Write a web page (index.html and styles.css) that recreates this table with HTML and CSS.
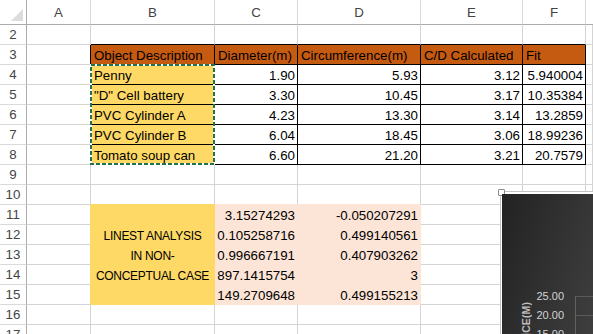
FILE: index.html
```html
<!DOCTYPE html>
<html>
<head>
<meta charset="utf-8">
<link rel="stylesheet" href="styles.css">
</head>
<body>
<div class="sheet">
  <div class="grid">
    <!-- column headers -->
    <div class="c corner"><svg width="12" height="12" viewBox="0 0 12 12"><polygon points="12,0 12,12 0,12" fill="#dcdcdc"/></svg></div>
    <div class="c ch">A</div><div class="c ch">B</div><div class="c ch">C</div><div class="c ch">D</div><div class="c ch">E</div><div class="c ch">F</div><div class="c ch last"></div>

    <!-- row 2 -->
    <div class="c rh">2</div><div class="c"></div><div class="c topb"></div><div class="c topb"></div><div class="c topb"></div><div class="c topb"></div><div class="c topb"></div><div class="c"></div>

    <!-- row 3 -->
    <div class="c rh">3</div><div class="c lb"></div>
    <div class="c hdr">Object Description</div><div class="c hdr">Diameter(m)</div><div class="c hdr">Circumference(m)</div><div class="c hdr">C/D Calculated</div><div class="c hdr">Fit</div><div class="c"></div>

    <!-- row 4 -->
    <div class="c rh">4</div><div class="c lb"></div>
    <div class="c tb yl">Penny</div><div class="c tb num">1.90</div><div class="c tb num">5.93</div><div class="c tb num">3.12</div><div class="c tb num">5.940004</div><div class="c"></div>

    <!-- row 5 -->
    <div class="c rh">5</div><div class="c lb"></div>
    <div class="c tb yl">"D" Cell battery</div><div class="c tb num">3.30</div><div class="c tb num">10.45</div><div class="c tb num">3.17</div><div class="c tb num">10.35384</div><div class="c"></div>

    <!-- row 6 -->
    <div class="c rh">6</div><div class="c lb"></div>
    <div class="c tb yl">PVC Cylinder A</div><div class="c tb num">4.23</div><div class="c tb num">13.30</div><div class="c tb num">3.14</div><div class="c tb num">13.2859</div><div class="c"></div>

    <!-- row 7 -->
    <div class="c rh">7</div><div class="c lb"></div>
    <div class="c tb yl">PVC Cylinder B</div><div class="c tb num">6.04</div><div class="c tb num">18.45</div><div class="c tb num">3.06</div><div class="c tb num">18.99236</div><div class="c"></div>

    <!-- row 8 -->
    <div class="c rh">8</div><div class="c lb"></div>
    <div class="c tb yl">Tomato soup can</div><div class="c tb num">6.60</div><div class="c tb num">21.20</div><div class="c tb num">3.21</div><div class="c tb num">20.7579</div><div class="c"></div>

    <!-- row 9 -->
    <div class="c rh">9</div><div class="c"></div><div class="c"></div><div class="c"></div><div class="c"></div><div class="c"></div><div class="c"></div><div class="c"></div>

    <!-- row 10 -->
    <div class="c rh">10</div><div class="c"></div><div class="c ylb"></div><div class="c peb"></div><div class="c peb"></div><div class="c"></div><div class="c"></div><div class="c"></div>

    <!-- row 11 -->
    <div class="c rh">11</div><div class="c yll"></div>
    <div class="c merge"><span>LINEST ANALYSIS<br>IN NON-<br>CONCEPTUAL CASE</span></div>
    <div class="c pe num">3.15274293</div><div class="c pe num">-0.050207291</div><div class="c"></div><div class="c"></div><div class="c"></div>

    <!-- row 12 -->
    <div class="c rh">12</div><div class="c yll"></div>
    <div class="c pe num">0.105258716</div><div class="c pe num">0.499140561</div><div class="c"></div><div class="c"></div><div class="c"></div>

    <!-- row 13 -->
    <div class="c rh">13</div><div class="c yll"></div>
    <div class="c pe num">0.996667191</div><div class="c pe num">0.407903262</div><div class="c"></div><div class="c"></div><div class="c"></div>

    <!-- row 14 -->
    <div class="c rh">14</div><div class="c yll"></div>
    <div class="c pe num">897.1415754</div><div class="c pe num">3</div><div class="c"></div><div class="c"></div><div class="c"></div>

    <!-- row 15 -->
    <div class="c rh">15</div><div class="c yll"></div>
    <div class="c pe num">149.2709648</div><div class="c pe num">0.499155213</div><div class="c"></div><div class="c"></div><div class="c"></div>

    <!-- row 16 -->
    <div class="c rh">16</div><div class="c"></div><div class="c"></div><div class="c"></div><div class="c"></div><div class="c"></div><div class="c"></div><div class="c"></div>

    <!-- row 17 -->
    <div class="c rh">17</div><div class="c"></div><div class="c"></div><div class="c"></div><div class="c"></div><div class="c"></div><div class="c"></div><div class="c"></div>
  </div>

  <svg class="marquee" width="125" height="101" viewBox="0 0 125 101">
    <rect x="1" y="1" width="123" height="99" fill="none" stroke="#ffffff" stroke-width="2"/>
    <rect x="1" y="1" width="123" height="99" fill="none" stroke="#217346" stroke-width="2" stroke-dasharray="4 2"/>
  </svg>

  <div class="chart">
    <div class="handle"></div>
    <div class="chart-bg">
      <div class="axis-title">CIRCUMFERENCE(M)</div>
      <div class="tick t25">25.00</div>
      <div class="tick t20">20.00</div>
      <div class="tick t15">15.00</div>
      <div class="vaxis"></div>
      <div class="gline g25"></div>
      <div class="gline g20"></div>
      <div class="gline g15"></div>
    </div>
  </div>
</div>
</body>
</html>
```

FILE: styles.css
```css
html, body {
  margin: 0;
  padding: 0;
  background: #ffffff;
  overflow: hidden;
}

.sheet {
  position: relative;
  width: 593px;
  height: 334px;
  overflow: hidden;
  font-family: "Liberation Sans", Arial, sans-serif;
  font-size: 13.3px;
  color: #000;
}

.grid {
  display: grid;
  grid-template-columns: 27px 64px 124px 83px 123px 102px 63px 1fr;
  grid-template-rows: 25px repeat(16, 20px);
}

.c {
  box-sizing: border-box;
  border-right: 1px solid #d4d4d4;
  border-bottom: 1px solid #d4d4d4;
  padding: 0 2px 0 3px;
  display: flex;
  align-items: flex-end;
  line-height: 16px;
  white-space: nowrap;
  overflow: hidden;
}

.corner {
  border-right-color: #ababab;
  border-bottom-color: #ababab;
  align-items: flex-end;
  justify-content: flex-end;
  padding: 0 3px 3px 0;
}

.ch {
  justify-content: center;
  align-items: center;
  color: #444;
  border-right-color: #dadada;
  border-bottom-color: #ababab;
  padding: 2px 0 0 0;
}

.ch.last {
  border-right: none;
}

.rh {
  justify-content: center;
  align-items: center;
  color: #444;
  border-right-color: #ababab;
  border-bottom-color: #dadada;
  padding: 1px 0 0 0;
}

.num {
  justify-content: flex-end;
  padding-left: 0;
}

.topb {
  border-bottom-color: #000;
}

.lb {
  border-right-color: #000;
}

.hdr {
  background: #c55a11;
  border-right-color: #000;
  border-bottom-color: #000;
}

.tb {
  border-right-color: #000;
  border-bottom-color: #000;
}

.yl {
  background: #ffd966;
}

.ylb {
  border-bottom-color: #ffd966;
}

.peb {
  border-bottom-color: #fce4d6;
}

.yll {
  border-right-color: #ffd966;
}

.merge {
  grid-row: span 5;
  background: #ffd966;
  border-right-color: #ffd966;
  border-bottom-color: #ffd966;
  justify-content: center;
  align-items: center;
  text-align: center;
  line-height: 20px;
  padding: 0;
  font-size: 12px;
  letter-spacing: -0.3px;
}

.merge span {
  padding-top: 2px;
}

.pe {
  background: #fce4d6;
  border-right-color: #fce4d6;
  border-bottom-color: #fce4d6;
}

.marquee {
  position: absolute;
  left: 90px;
  top: 64px;
}

/* floating chart object */
.chart {
  position: absolute;
  left: 500px;
  top: 191px;
  width: 130px;
  height: 170px;
  border: 1px solid #c2c2c2;
  padding: 2px 0 0 1px;
  background: #ffffff;
}

.handle {
  position: absolute;
  left: -3px;
  top: -3px;
  width: 5px;
  height: 5px;
  border: 1px solid #8c8c8c;
  border-radius: 1px;
  background: #ffffff;
}

.chart-bg {
  position: relative;
  width: 100%;
  height: 100%;
  background: linear-gradient(105deg, #222222 0%, #323232 40%, #484848 100%);
  overflow: hidden;
}

.axis-title {
  position: absolute;
  left: 17px;
  top: 108px;
  writing-mode: vertical-rl;
  transform: rotate(180deg);
  font-family: "Liberation Sans", sans-serif;
  font-size: 10.5px;
  font-weight: bold;
  line-height: 14px;
  color: #bdbdbd;
  letter-spacing: 0.1px;
}

.tick {
  position: absolute;
  right: 68px;
  width: 40px;
  text-align: right;
  font-size: 11px;
  line-height: 14px;
  color: #d4d4d4;
}

.t25 { top: 95px; }
.t20 { top: 114px; }
.t15 { top: 133px; }

.vaxis {
  position: absolute;
  left: 73px;
  top: 102px;
  width: 1px;
  height: 80px;
  background: #626262;
}

.gline {
  position: absolute;
  left: 74px;
  right: 0;
  height: 1px;
  background: #5a5a5a;
}

.g25 { top: 102px; }
.g20 { top: 121px; }
.g15 { top: 140px; }
```
